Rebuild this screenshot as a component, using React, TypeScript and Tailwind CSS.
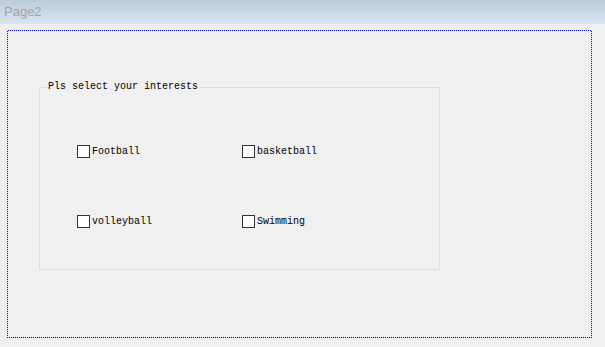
const items = [
  ['Football', 'basketball'],
  ['volleyball', 'Swimming'],
];

function CheckItem({ label }: { label: string }) {
  return (
    <div className="flex items-center gap-[2px]">
      <span className="block w-[13px] h-[13px] border border-[#333333] bg-white" />
      <span className="text-[10px] leading-[12px] text-black">{label}</span>
    </div>
  );
}

export default function App() {
  return (
    <div className="w-[605px] h-[347px] flex flex-col bg-[#f0f0f0] overflow-hidden font-['Liberation_Mono',monospace]">
      <div className="h-[24px] shrink-0 bg-gradient-to-b from-[#bccbd9] to-[#d9e5f1] flex items-center px-[4px]">
        <span className="font-['Liberation_Sans',sans-serif] text-[13px] text-[#a3a3a3]">Page2</span>
      </div>
      <div className="flex-1 pt-[6px] pb-[9px] pl-[7px] pr-[13px]">
        {/* focus rectangle: 1px blue dots */}
        <div className="h-[308px] p-[1px] bg-[repeating-conic-gradient(#0000d8_0_25%,transparent_0_50%)] bg-[length:2px_2px]">
          <div className="h-full bg-[#f0f0f0] pl-[31px] pt-[50px]">
            <fieldset className="w-[401px] min-w-0 h-[189px] border border-[#dcdcdc] p-0">
              <legend className="ml-[7px] px-[1px] text-[10px] leading-[12px] text-black">
                Pls select your interests
              </legend>
              <div className="flex flex-col gap-[57px] pt-[52px] pl-[37px]">
                {items.map((row, i) => (
                  <div key={i} className="flex">
                    {row.map((label) => (
                      <div key={label} className="w-[165px]">
                        <CheckItem label={label} />
                      </div>
                    ))}
                  </div>
                ))}
              </div>
            </fieldset>
          </div>
        </div>
      </div>
      <div className="h-[3px] shrink-0 bg-[#dfe8f3]" />
    </div>
  );
}
